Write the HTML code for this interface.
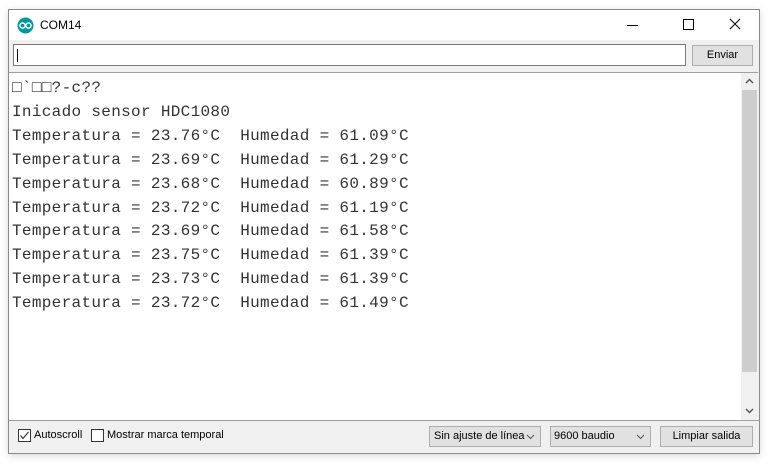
<!DOCTYPE html>
<html><head><style>
body{margin:0;width:768px;height:466px;background:#fff;position:relative;overflow:hidden;font-family:"Liberation Sans",sans-serif}
.win{position:absolute;left:8px;top:9px;width:750px;height:443px;border:1px solid #8a8a8a;background:#f0f0f0;box-shadow:0 2px 8px rgba(0,0,0,.15)}
.title{position:absolute;left:0;top:0;width:750px;height:30px;background:#fff}
.abs{position:absolute}
.out{position:absolute;left:0;top:62px;width:732px;height:348px;background:#fff;border-top:1px solid #a0a0a0;font-family:"Liberation Mono",monospace;font-size:16px;letter-spacing:0.32px;color:#333;white-space:pre;line-height:23.9px;padding-left:3px;box-sizing:border-box;padding-top:4px}
.btn{position:absolute;background:#e1e1e1;border:1px solid #adadad;font-size:11px;color:#000;text-align:center;box-sizing:border-box}
.sm{font-size:11px;color:#000}
</style></head><body>
<div class="win">
 <div class="title">
  <svg class="abs" style="left:8px;top:7px" width="17" height="17" viewBox="0 0 17 17"><circle cx="8.5" cy="8.5" r="8" fill="#00979c"/><circle cx="5.5" cy="8.5" r="2.6" fill="none" stroke="#fff" stroke-width="1.4"/><circle cx="11.5" cy="8.5" r="2.6" fill="none" stroke="#fff" stroke-width="1.4"/></svg>
  <div class="abs" style="left:31px;top:8px;font-size:12px;color:#000">COM14</div>
  <div class="abs" style="left:618px;top:15px;width:11px;height:1px;background:#000"></div>
  <div class="abs" style="left:674px;top:9px;width:9px;height:9px;border:1px solid #000"></div>
  <svg class="abs" style="left:720px;top:8px" width="12" height="12"><path d="M1 1L11 11M11 1L1 11" stroke="#000" stroke-width="1"/></svg>
 </div>
 <div class="abs" style="left:4px;top:34px;width:673px;height:22px;background:#fff;border:1px solid #7a7a7a;box-sizing:border-box"><div class="abs" style="left:3px;top:4px;width:1px;height:13px;background:#000"></div></div>
 <div class="btn" style="left:683px;top:35px;width:61px;height:21px;line-height:19px">Enviar</div>
 <div class="out">□`□□?-c??
Inicado sensor HDC1080
Temperatura = 23.76°C  Humedad = 61.09°C
Temperatura = 23.69°C  Humedad = 61.29°C
Temperatura = 23.68°C  Humedad = 60.89°C
Temperatura = 23.72°C  Humedad = 61.19°C
Temperatura = 23.69°C  Humedad = 61.58°C
Temperatura = 23.75°C  Humedad = 61.39°C
Temperatura = 23.73°C  Humedad = 61.39°C
Temperatura = 23.72°C  Humedad = 61.49°C</div>
 <div class="abs" style="left:732px;top:62px;width:17px;height:348px;background:#f0f0f0;border-top:1px solid #a0a0a0"></div>
 <div class="abs" style="left:733px;top:80px;width:15px;height:282px;background:#cdcdcd"></div>
 <svg class="abs" style="left:736px;top:68px" width="9" height="6"><path d="M1 5L4.5 1.5L8 5" stroke="#555" stroke-width="1.5" fill="none"/></svg>
 <svg class="abs" style="left:736px;top:398px" width="9" height="6"><path d="M1 1L4.5 4.5L8 1" stroke="#555" stroke-width="1.5" fill="none"/></svg>
 <div class="abs" style="left:0;top:410px;width:750px;height:1px;background:#a0a0a0"></div>
 <div class="abs" style="left:9px;top:419px;width:13px;height:13px;border:1px solid #333;background:#fff;box-sizing:border-box"></div>
 <svg class="abs" style="left:10px;top:420px" width="11" height="11"><path d="M1.5 5.5L4 8.5L9.5 2" stroke="#333" stroke-width="1.2" fill="none"/></svg>
 <div class="abs sm" style="left:25px;top:419px">Autoscroll</div>
 <div class="abs" style="left:82px;top:419px;width:13px;height:13px;border:1px solid #333;background:#fff;box-sizing:border-box"></div>
 <div class="abs sm" style="left:98px;top:419px">Mostrar marca temporal</div>
 <div class="btn" style="left:420px;top:416px;width:112px;height:21px;line-height:19px;text-align:left;padding-left:4px">Sin ajuste de línea</div>
 <svg class="abs" style="left:517px;top:424px" width="9" height="6"><path d="M1 1L4.5 4.5L8 1" stroke="#555" stroke-width="1" fill="none"/></svg>
 <div class="btn" style="left:541px;top:416px;width:101px;height:21px;line-height:19px;text-align:left;padding-left:3px">9600 baudio</div>
 <svg class="abs" style="left:627px;top:424px" width="9" height="6"><path d="M1 1L4.5 4.5L8 1" stroke="#555" stroke-width="1" fill="none"/></svg>
 <div class="btn" style="left:651px;top:416px;width:93px;height:21px;line-height:19px">Limpiar salida</div>
</div>
</body></html>
